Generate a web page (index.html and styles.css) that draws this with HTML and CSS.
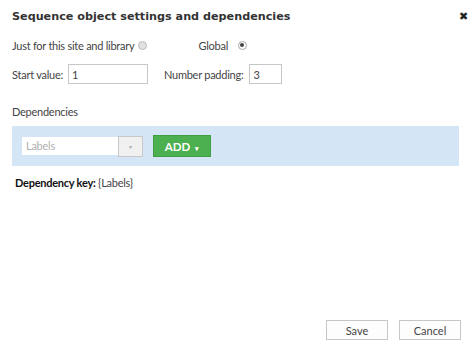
FILE: index.html
```html
<!DOCTYPE html>
<html lang="en">
<head>
    <meta charset="UTF-8">
    <meta name="viewport" content="width=device-width, initial-scale=1.0">
    <title>Sequence object settings</title>
    <link rel="stylesheet" href="styles.css">
</head>
<body>
    <div class="dialog">
        <div class="dialog-header">
            <h1>Sequence object settings and dependencies</h1>
            <span class="close">&#10006;</span>
        </div>
        <div class="row">
            <label class="scope">Just for this site and library <span class="radio"></span></label>
            <label class="scope global">Global <span class="radio checked"></span></label>
        </div>
        <div class="row">
            <label class="field">Start value: <input type="text" class="start-input" value="1"></label>
            <label class="field">Number padding: <input type="text" class="pad-input" value="3"></label>
        </div>
        <div class="section-title">Dependencies</div>
        <div class="dep-band">
            <div class="combo">
                <span class="combo-text">Labels</span>
                <span class="combo-arrow">&#9662;</span>
            </div>
            <button class="add-button">ADD <span class="caret">&#9662;</span></button>
        </div>
        <div class="dep-key"><b>Dependency key:</b> {Labels}</div>
        <div class="dialog-footer">
            <button class="dialog-button">Save</button>
            <button class="dialog-button">Cancel</button>
        </div>
    </div>
</body>
</html>
```

FILE: styles.css
```css
body {
    margin: 0;
    background: #fff;
    font-family: Lato, "Open Sans", sans-serif;
    font-size: 11px;
    letter-spacing: -0.25px;
    color: #444;
}

.dialog {
    width: 474px;
    height: 361px;
    box-sizing: border-box;
    padding: 6px 12px 0 12px;
    display: flex;
    flex-direction: column;
}

.dialog-header {
    display: flex;
    justify-content: space-between;
    align-items: center;
    height: 20px;
}

h1 {
    margin: 0;
    font-family: "DejaVu Sans", Verdana, sans-serif;
    font-size: 11.2px;
    font-weight: bold;
    letter-spacing: 0;
    color: #333;
}

.close {
    font-size: 11px;
    color: #222;
    margin-right: -6px;
}

.row {
    display: flex;
    align-items: center;
}

.row:nth-of-type(2) {
    margin-top: 11px;
    height: 16px;
}

.row:nth-of-type(3) {
    margin-top: 11px;
}

.scope {
    display: flex;
    align-items: center;
}

.global {
    margin-left: 51px;
}

.radio {
    display: inline-block;
    width: 9px;
    height: 9px;
    border: 1px solid #bbb;
    border-radius: 50%;
    background: #e2e2e2;
    margin-left: 4px;
    box-sizing: border-box;
}

.radio.checked {
    background: #fff;
    border-color: #aaa;
    margin-left: 10px;
    position: relative;
}

.radio.checked::after {
    content: "";
    position: absolute;
    left: 1.5px;
    top: 1.5px;
    width: 4px;
    height: 4px;
    border-radius: 50%;
    background: #444;
}

.field {
    display: flex;
    align-items: center;
}

.field + .field {
    margin-left: 16px;
}

.field input {
    font-family: inherit;
    font-size: 11px;
    color: #444;
    height: 20px;
    box-sizing: border-box;
    border: 1px solid #c6c6c6;
    padding: 0 3px;
    margin-left: 5px;
}

.pad-input {
    width: 33px;
    margin-left: 6px !important;
}

.start-input {
    width: 80px;
}

.section-title {
    margin-top: 21px;
}

.dep-band {
    margin-top: 8px;
    background: #d4e6f5;
    height: 40px;
    width: 447px;
    display: flex;
    align-items: center;
    padding-left: 10px;
    box-sizing: border-box;
}

.combo {
    display: flex;
    align-items: center;
}

.combo-text {
    width: 96px;
    height: 18px;
    line-height: 18px;
    background: #fff;
    color: #b0b0b0;
    padding-left: 4px;
    box-sizing: border-box;
}

.combo-arrow {
    width: 25px;
    height: 21px;
    box-sizing: border-box;
    border: 1px solid #c8c8c8;
    background: #f0f0f0;
    color: #aaa;
    font-size: 6px;
    display: flex;
    align-items: center;
    justify-content: center;
}

.add-button {
    margin-left: 10px;
    width: 58px;
    height: 22px;
    border: 1px solid #3e9e44;
    background: #4cb050;
    color: #fff;
    font-family: inherit;
    font-size: 11.5px;
    font-weight: bold;
    letter-spacing: 0;
    padding: 0;
}

.caret {
    font-size: 7px;
    margin-left: 2px;
}

.dep-key {
    margin-top: 10px;
    padding-left: 3px;
    color: #444;
}

.dep-key b {
    color: #111;
}

.dialog-footer {
    margin-top: auto;
    margin-bottom: 21px;
    display: flex;
    justify-content: flex-end;
    gap: 11px;
    padding-right: 1px;
}

.dialog-button {
    width: 62px;
    height: 20px;
    border: 1px solid #c6c6c6;
    background: #fdfdfd;
    font-family: inherit;
    font-size: 11px;
    color: #444;
    padding: 0;
}
```
